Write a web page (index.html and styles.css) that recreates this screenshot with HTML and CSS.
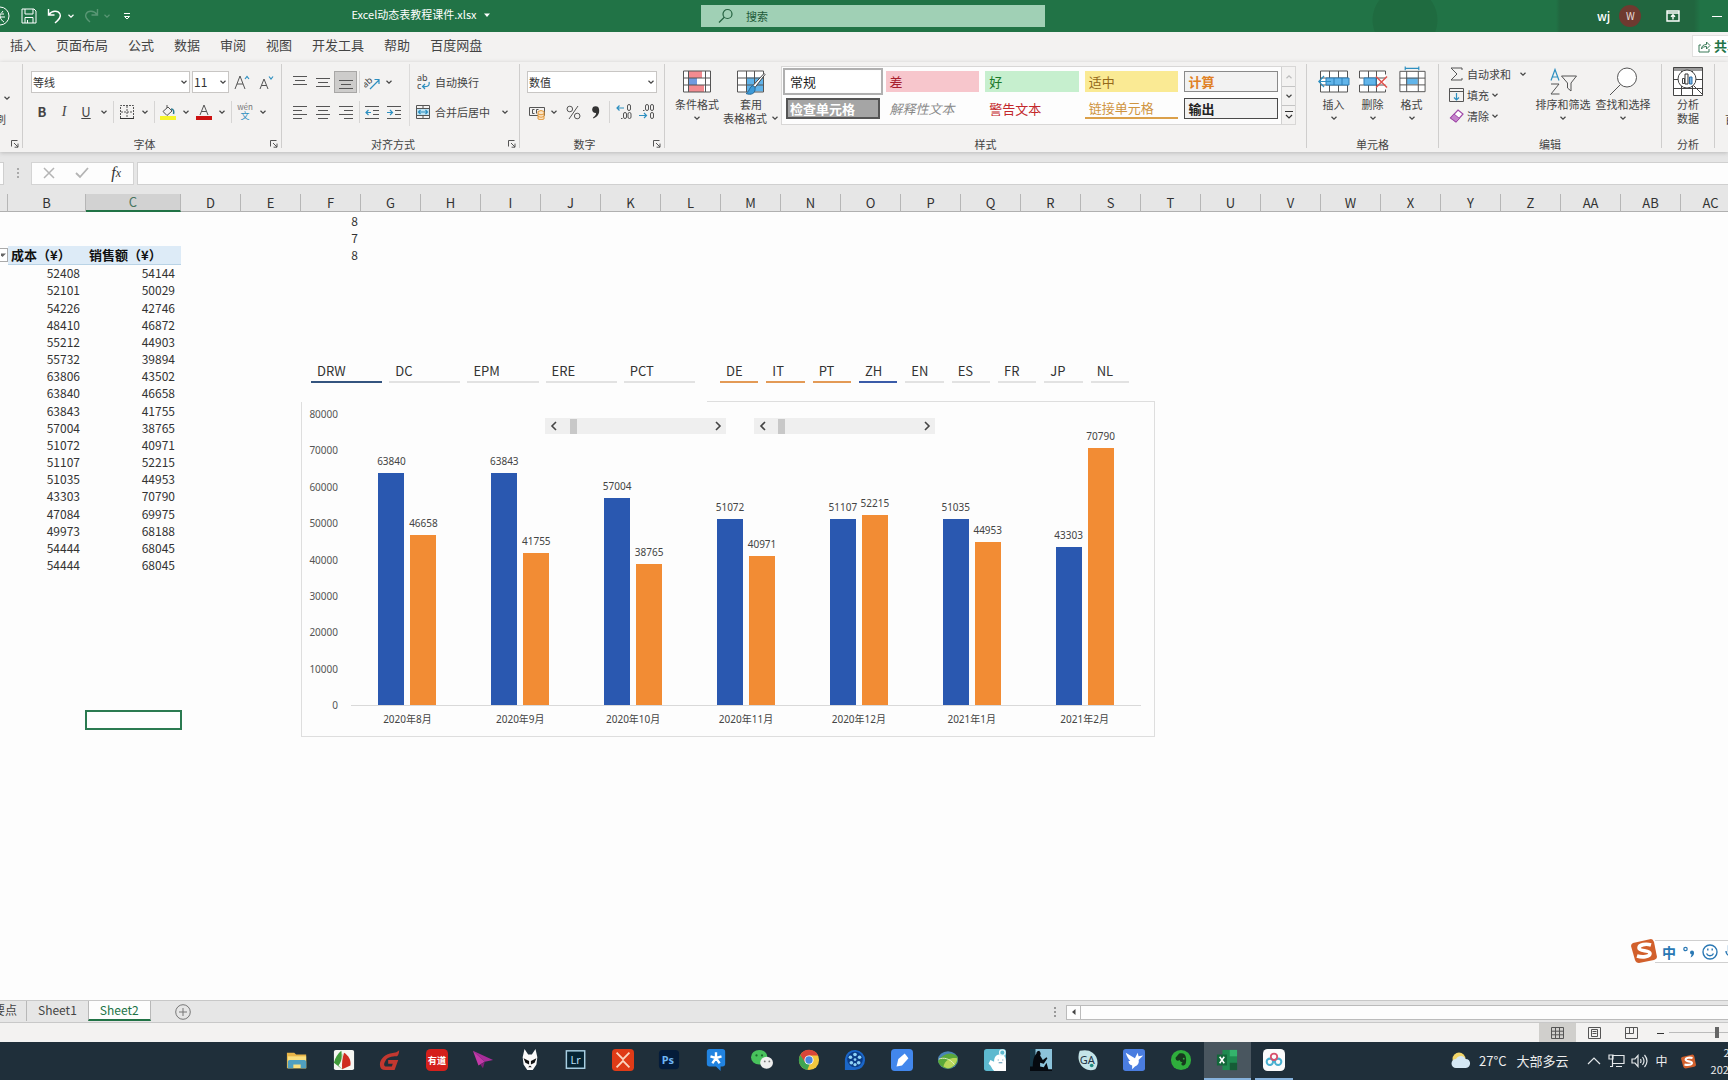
FILE: index.html
```html
<!DOCTYPE html>
<html lang="zh-CN">
<head>
<meta charset="utf-8">
<title>Excel动态表教程课件.xlsx</title>
<link rel="stylesheet" href="styles.css">
</head>
<body>
<svg class="defs" aria-hidden="true">
  <symbol id="chev" viewBox="0 0 8 8"><path d="M1.5 2.8 4 5.2l2.5-2.4" fill="none" stroke="currentColor" stroke-width="1.2"/></symbol>
  <symbol id="launch" viewBox="0 0 8 8"><path d="M.5 6.5v-6h6M3 3l4 4M7 3.6V7.200H3.600" fill="none" stroke="#555"/></symbol>
  <symbol id="sogou" viewBox="0 0 26 26"><path d="M2 5 20 1q2 0 3 3l3 15q0 2-3 3L8 25q-3 0-4-3L0 8q0-2 2-3z" fill="#d2602c"/><path d="M20 7c-5-1.500-12-.5-12 3s11 2 11 5.500-8 4-13 2.500" fill="none" stroke="#fff" stroke-width="3.600"/></symbol>
</svg>

<header class="titlebar">
  <div class="qat">
    <button class="qbtn auto" aria-label="自动保存"><svg width="20" height="20" viewBox="0 0 20 20"><circle cx="10" cy="10" r="9" class="ln"/><path class="ln" d="M7 5l1.500 2M13 5l-1.500 2M6 8h8M5 11h10M10 8v3c0 2-2 4-4 5M10 11c1 2 2 4 4 5"/></svg></button>
    <button class="qbtn save" aria-label="保存"><svg width="16" height="16" viewBox="0 0 16 16"><path class="ln" d="M1 1h12l2 2v12H1zM4 1v5h8V1M4 15V9.500h8V15M6.500 15v-3"/></svg></button>
    <button class="qbtn undo" aria-label="撤消"><svg width="16" height="16" viewBox="0 0 16 16"><path class="ln2" d="M1.500 1v6h6M2 6.500C5 2.500 11 2 13 6c1.500 3-1 5.500-5 9"/></svg><svg class="chev"><use href="#chev"/></svg></button>
    <button class="qbtn undo dim" aria-label="恢复"><svg width="16" height="16" viewBox="0 0 16 16"><path class="ln2" d="M14.500 1v6h-6M14 6.500C11 2.500 5 2 3 6c-1.500 3 1 5.500 4 8"/></svg><svg class="chev"><use href="#chev"/></svg></button>
    <button class="qbtn" aria-label="自定义"><svg width="10" height="10" viewBox="0 0 10 10"><path class="ln" d="M2 2.500h6M2.500 5.500 5 8l2.500-2.500z"/></svg></button>
  </div>
  <button class="doc">Excel动态表教程课件.xlsx<svg width="8" height="8" viewBox="0 0 8 8"><path d="M1 2.500h6L4 6z" fill="#fff"/></svg></button>
  <label class="search"><svg width="16" height="16" viewBox="0 0 16 16"><circle cx="9.500" cy="6" r="4.500"/><path d="M6.300 9.300 1 14.500"/></svg><input type="text" placeholder="搜索" aria-label="搜索"></label>
  <div class="user"><span>wj</span><span class="avatar">W</span>
    <button class="qbtn" aria-label="功能区显示选项"><svg width="14" height="12" viewBox="0 0 14 12"><path class="ln2" d="M1 1h12v10H1zM1 3h12M7 9.500V5M5 6.800 7 4.800l2 2"/></svg></button>
    <button class="qbtn mini" aria-label="最小化"><svg width="10" height="10" viewBox="0 0 10 10"><path class="ln" d="M0 5.500h10"/></svg></button>
  </div>
</header>

<nav class="tabs">
  <a href="#">插入</a><a href="#">页面布局</a><a href="#">公式</a><a href="#">数据</a><a href="#">审阅</a><a href="#">视图</a><a href="#">开发工具</a><a href="#">帮助</a><a href="#">百度网盘</a>
  <button class="share"><svg width="13" height="13" viewBox="0 0 13 13"><path d="M3 5H1v7h10V9M3.500 9c0-3 2-4.500 5-4.500V2l3.500 3.500L8.500 9V6.500c-2 0-4 .5-5 2.500z" fill="none" stroke="#3a7a58"/></svg>共享</button>
</nav>

<section class="ribbon">
  <div class="group g-clip">
    <div class="gbody clipcol"><svg class="chev"><use href="#chev"/></svg><span>刷</span></div>
    <div class="glabel"><svg class="launch"><use href="#launch"/></svg></div>
  </div>

  <div class="group g-font">
    <div class="gbody rows">
      <div class="row">
        <button class="combo wide">等线<svg class="chev"><use href="#chev"/></svg></button>
        <button class="combo size">11<svg class="chev"><use href="#chev"/></svg></button>
        <button class="b22" aria-label="增大字号"><svg width="16" height="16" viewBox="0 0 16 16"><path class="k" d="M1 15 6 2l5 13M3 10h6"/><path class="bl" d="M11 5l2-2.500L15 5"/></svg></button>
        <button class="b22" aria-label="减小字号"><svg width="16" height="16" viewBox="0 0 16 16"><path class="k" d="M2 15 6 5l4 10M3.500 11.500h5"/><path class="bl" d="M11 2.500 13 5l2-2.500"/></svg></button>
      </div>
      <div class="row tight">
        <button class="b22 bold">B</button><button class="b22 ital">I</button><button class="b22 und">U</button><button class="cv" aria-label="下划线"><svg class="chev"><use href="#chev"/></svg></button><i class="sep s5"></i>
        <button class="b22" aria-label="边框"><svg width="14" height="14" viewBox="0 0 14 14"><path d="M.5 13V.5h13V13M7 1v12M1 7h12" fill="none" stroke="#555" stroke-dasharray="2 1"/><path d="M0 13.500h14" stroke="#333"/></svg></button><button class="cv" aria-label="边框选项"><svg class="chev"><use href="#chev"/></svg></button><i class="sep s5"></i>
        <button class="b22" aria-label="填充颜色"><svg width="16" height="16" viewBox="0 0 16 16"><path class="k" d="M3 7.500 8 3l4 4-5 4.500zM7 4V1"/><path d="M11 5c3 0 3 3 2.500 5" fill="none" stroke="#2a7a90" stroke-width="1.500"/><path d="M0 12h16v4H0z" fill="#f6f52a"/></svg></button><button class="cv" aria-label="填充选项"><svg class="chev"><use href="#chev"/></svg></button>
        <button class="b22" aria-label="字体颜色"><svg width="16" height="16" viewBox="0 0 16 16"><path class="k" d="M4 11 8 1l4 10M5.500 7.500h5"/><path d="M0 12h16v4H0z" fill="#c11"/></svg></button><button class="cv" aria-label="字体颜色选项"><svg class="chev"><use href="#chev"/></svg></button><i class="sep s5"></i>
        <button class="b22 wen"><span>wén</span><span class="w2">文</span></button><button class="cv" aria-label="拼音"><svg class="chev"><use href="#chev"/></svg></button>
      </div>
    </div>
    <div class="glabel side">字体<svg class="launch"><use href="#launch"/></svg></div>
  </div>

  <div class="group g-align">
    <div class="gbody cols">
      <div class="rows">
        <div class="row tight">
          <button class="b23" aria-label="顶端对齐"><svg width="14" height="16" viewBox="0 0 14 16"><path class="k" d="M0 2.500h14M2 6.500h10M0 10.500h14"/></svg></button>
          <button class="b23" aria-label="垂直居中"><svg width="14" height="16" viewBox="0 0 14 16"><path class="k" d="M0 4.500h14M2 8.500h10M0 12.500h14"/></svg></button>
          <button class="b23 on" aria-label="底端对齐"><svg width="14" height="16" viewBox="0 0 14 16"><path class="k" d="M0 6.500h14M2 10.500h10M0 14.500h14"/></svg></button><i class="sep s5"></i>
          <button class="b20" aria-label="方向"><svg width="17" height="16" viewBox="0 0 17 16"><text x="-2" y="10" class="abt" transform="rotate(-42 5 8)">ab</text><path class="bl" d="M6 15 15 6M10.500 5.500H15V10"/></svg></button><button class="cv" aria-label="方向选项"><svg class="chev"><use href="#chev"/></svg></button>
        </div>
        <div class="row tight">
          <button class="b23" aria-label="左对齐"><svg width="14" height="14" viewBox="0 0 14 14"><path class="k" d="M0 1.500h14M0 5.500h9M0 9.500h14M0 13.500h9"/></svg></button>
          <button class="b23" aria-label="居中"><svg width="14" height="14" viewBox="0 0 14 14"><path class="k" d="M0 1.500h14M2 5.500h10M0 9.500h14M2 13.500h10"/></svg></button>
          <button class="b23" aria-label="右对齐"><svg width="14" height="14" viewBox="0 0 14 14"><path class="k" d="M0 1.500h14M5 5.500h9M0 9.500h14M5 13.500h9"/></svg></button><i class="sep s5"></i>
          <button class="b20" aria-label="减少缩进"><svg width="14" height="14" viewBox="0 0 14 14"><path class="k" d="M0 1.500h14M8 5.500h6M8 9.500h6M0 13.500h14"/><path class="bl" d="M6 7.500H1M3.500 5 1 7.500 3.500 10"/></svg></button>
          <button class="b23" aria-label="增加缩进"><svg width="14" height="14" viewBox="0 0 14 14"><path class="k" d="M0 1.500h14M8 5.500h6M8 9.500h6M0 13.500h14"/><path class="bl" d="M0 7.500h5M3 5l2.500 2.500L3 10"/></svg></button>
        </div>
      </div>
      <div class="rows ruled">
        <div class="row"><button class="tb"><svg width="14" height="16" viewBox="0 0 14 16"><text x="1" y="7" class="abt">ab</text><text x="1" y="15" class="abt">c</text><path class="bl" d="M13 8c1 4-2 5-6 4.500M9 10l-2.500 2.500L9 15"/></svg>自动换行</button></div>
        <div class="row"><button class="tb"><svg width="14" height="14" viewBox="0 0 14 14"><path d="M.5 3.500h13v7H.5z" fill="#bfe3f3"/><path class="k" d="M.5.5h13v13H.5zM.5 3.500h13M.5 10.500h13M7 .5v3M7 10.500v3"/><path class="bl" d="M2.500 7h9M4.500 5l-2 2 2 2M9.500 5l2 2-2 2"/></svg>合并后居中<svg class="chev far"><use href="#chev"/></svg></button></div>
      </div>
    </div>
    <div class="glabel side">对齐方式<svg class="launch"><use href="#launch"/></svg></div>
  </div>

  <div class="group g-num">
    <div class="gbody rows">
      <div class="row"><button class="combo num">数值<svg class="chev"><use href="#chev"/></svg></button></div>
      <div class="row tight">
        <button class="b20" aria-label="会计格式"><svg width="17" height="15" viewBox="0 0 17 15"><path class="k" d="M.5 2.500h15v8H.5zM5.500 4.500h-2v4h2M9.500 4.500h-2v4"/><path d="M9 6.500q3-2 6 0V14q-3 1.500-6 0zM9 9q3 1.500 6 0M9 11.500q3 1.500 6 0" fill="#fbe3c4" stroke="#e39a3c"/></svg></button><button class="cv" aria-label="会计选项"><svg class="chev"><use href="#chev"/></svg></button>
        <button class="b24" aria-label="百分比"><svg width="15" height="15" viewBox="0 0 15 15"><circle class="k" cx="3.800" cy="4" r="2.800"/><circle class="k" cx="11.200" cy="11" r="2.800"/><path class="k" d="M12 1 3 14"/></svg></button>
        <button class="b22" aria-label="千位分隔"><svg width="8" height="13" viewBox="0 0 8 13"><circle cx="3.600" cy="3.600" r="3.400" fill="#333"/><path d="M7 3c1 5-2 8-5.500 9.500L1 11.500c2.500-1.500 3.500-3.500 3-6z" fill="#333"/></svg></button><i class="sep s5"></i>
        <button class="b23" aria-label="增加小数"><svg width="16" height="16" viewBox="0 0 16 16"><path class="bl" d="M1 4h7M3.500 1.500 1 4l2.500 2.500"/><path class="k" d="M5 14.500h1.500"/><rect class="k" x="11.500" y=".5" width="3" height="6" rx="1.500"/><rect class="k" x="7.500" y="8.500" width="3" height="6" rx="1.500"/><rect class="k" x="12" y="8.500" width="3" height="6" rx="1.500"/></svg></button>
        <button class="b23" aria-label="减少小数"><svg width="16" height="16" viewBox="0 0 16 16"><path class="bl" d="M0 11.500h7.500M5 9l2.500 2.500L5 14"/><path class="k" d="M4 6.500h1.500"/><rect class="k" x="6.500" y=".5" width="3" height="6" rx="1.500"/><rect class="k" x="11.500" y=".5" width="3" height="6" rx="1.500"/><rect class="k" x="11.500" y="8.500" width="3" height="6" rx="1.500"/></svg></button>
      </div>
    </div>
    <div class="glabel side">数字<svg class="launch"><use href="#launch"/></svg></div>
  </div>

  <div class="group g-style">
    <div class="gbody bigs">
      <button class="big w52"><svg width="28" height="24" viewBox="0 0 28 24"><path d="M.5 1.500h27v21H.5z" fill="#fff"/><path d="M5 1.500h14v7H5zM5 15.500h16v7H5z" fill="#f28b90"/><path d="M5 8.500h9v7H5z" fill="#6f9be0"/><path class="k" d="M.5 1.500h27v21H.5zM.5 8.500h27M.5 15.500h27M5.500 1.500v21M22.500 1.500v21"/></svg><span>条件格式</span><svg class="chev"><use href="#chev"/></svg></button>
      <button class="big w54"><svg width="30" height="28" viewBox="0 0 30 28"><path d="M1.500 3.500h26v21h-26z" fill="#fff"/><path d="M10 10h17v14H10z" fill="#5fb3ea"/><path class="k" d="M1.500 3.500h26v21h-26zM1.500 10.500h26M1.500 17.500h26M10.500 3.500v21M18.500 3.500v21"/><path d="M29 7 19 20l-2-2L28 6z" fill="#fff" stroke="#444"/><path d="M17 18c-4 1-3 6-7 8 5 2 10 0 9-6z" fill="#3c9ad8" stroke="#286c9c"/></svg><span>套用</span><span>表格格式<svg class="chev"><use href="#chev"/></svg></span></button>
      <div class="gallery">
        <div class="tiles">
          <button class="tile normal">常规</button><button class="tile bad">差</button><button class="tile good">好</button><button class="tile neutral">适中</button><button class="tile calc">计算</button>
          <button class="tile check">检查单元格</button><button class="tile expl">解释性文本</button><button class="tile warn">警告文本</button><button class="tile link">链接单元格</button><button class="tile outp">输出</button>
        </div>
        <div class="gscroll"><button class="off" aria-label="上"><svg class="chev flip"><use href="#chev"/></svg></button><button aria-label="下"><svg class="chev"><use href="#chev"/></svg></button><button aria-label="其他"><svg width="8" height="10" viewBox="0 0 8 10"><path d="M0 1.500h8M1 5l3 3 3-3" fill="none" stroke="#333" stroke-width="1.200"/></svg></button></div>
      </div>
    </div>
    <div class="glabel">样式</div>
  </div>

  <div class="group g-cells">
    <div class="gbody bigs">
      <button class="big w39"><svg width="32" height="24" viewBox="0 0 32 24"><path d="M2.500 1.500h27v21h-27z" fill="#fff"/><path class="k" d="M2.500 1.500h27v21h-27zM2.500 8.500h27M2.500 15.500h27M11.500 1.500v21M20.500 1.500v21"/><path d="M8 8.500h23v7H8z" fill="#62b5ea" stroke="#2c7fb8"/><path d="M16 8.500v7M24 8.500v7" stroke="#2c7fb8"/><path class="bl" d="M13 12H1M6 6.500.8 12 6 17.500"/></svg><span>插入</span><svg class="chev"><use href="#chev"/></svg></button>
      <button class="big w39"><svg width="30" height="24" viewBox="0 0 30 24"><path d="M1.500 1.500h26v21h-26z" fill="#fff"/><path class="k" d="M27.500 5V1.500h-26v7M1.500 15.500v7h26V20M1.500 8.500h26M1.500 15.500h26M10.500 1.500v21M18.500 1.500v21"/><path d="M6 8.500h12v7H6z" fill="#62b5ea" stroke="#2c7fb8"/><path d="m18 7 11 11M29 7 18 18" stroke="#e0524e" stroke-width="1.500"/></svg><span>删除</span><svg class="chev"><use href="#chev"/></svg></button>
      <button class="big w39"><svg width="28" height="32" viewBox="0 0 28 32"><path d="M1.500 5.500h26v21h-26z" fill="#fff"/><path d="M8 12h12v7H8z" fill="#62b5ea"/><path class="k" d="M1.500 5.500h26v21h-26zM1.500 12.500h26M1.500 19.500h26M8.500 5.500v21M20.500 5.500v21"/><path class="bl" d="M7 2.500h14M7 .5v4M21 .5v4"/></svg><span>格式</span><svg class="chev"><use href="#chev"/></svg></button>
    </div>
    <div class="glabel">单元格</div>
  </div>

  <div class="group g-edit">
    <div class="gbody bigs">
      <div class="stack">
        <button class="tb s2"><svg width="16" height="14" viewBox="0 0 16 14"><path class="k" d="M13 3V1H2l6 6-6 6h11v-2"/></svg>自动求和<svg class="chev far"><use href="#chev"/></svg></button>
        <button class="tb s2"><svg width="16" height="14" viewBox="0 0 16 14"><path class="k" d="M.5.5h14v13H.5zM.5 3.500h14"/><path class="bl" d="M7.500 5v7M5 9.500 7.500 12 10 9.500"/></svg>填充<svg class="chev"><use href="#chev"/></svg></button>
        <button class="tb s2"><svg width="16" height="14" viewBox="0 0 16 14"><path d="M9 1 14 5 7 13 1.500 9z" fill="#fff" stroke="#a04ba8" stroke-width="1.200"/><path d="M1.500 9 5 5l5.500 4.500L7 13z" fill="#c583cc" stroke="#a04ba8"/></svg>清除<svg class="chev"><use href="#chev"/></svg></button>
      </div>
      <button class="big w60"><svg width="30" height="28" viewBox="0 0 30 28"><path class="bl" d="M3 13 7 2l4 11M4.500 9.500h5"/><path class="k" d="M3 16.500h8L3 26.500h8.500M13.500 8.500h15l-5.500 7v8l-3.500-3v-5z"/></svg><span>排序和筛选</span><svg class="chev"><use href="#chev"/></svg></button>
      <button class="big w60"><svg width="30" height="30" viewBox="0 0 30 30"><circle class="k" cx="19" cy="11" r="9.500" fill="#fff"/><path class="k" d="M12.500 18 2 28.500"/></svg><span>查找和选择</span><svg class="chev"><use href="#chev"/></svg></button>
    </div>
    <div class="glabel">编辑</div>
  </div>

  <div class="group g-ana">
    <div class="gbody bigs">
      <button class="big w52"><svg width="30" height="31" viewBox="0 0 30 31"><path d="M.5 1.500h29v28H.5z" fill="#fff"/><path d="M.5 1h29v4H.5z" fill="#999"/><path class="kk" d="M.5 1.500h29v28H.5zM.5 13.500h29M.5 22.500h29M8.500 5v24M19.500 5v24"/><circle cx="14" cy="13" r="9" fill="#fff" class="kk"/><path class="kk" d="m20.500 19.500 9 9M9.500 12.500h2v5h-2z"/><path d="M12 8h3v10h-3z" fill="#fff" stroke="#333"/><path d="M16.500 11h2.500v7h-2.500z" fill="#7db8e8" stroke="#2c6ea8"/></svg><span>分析</span><span>数据</span></button>
    </div>
    <div class="glabel">分析</div>
  </div>
  <div class="group g-last"><div class="gbody"><span>百度网盘</span></div></div>
</section>

<section class="fbar">
  <div class="namebox"></div>
  <svg class="grip" width="4" height="12" viewBox="0 0 4 12"><path d="M1 1h2v2H1zM1 5h2v2H1zM1 9h2v2H1z" fill="#aaa"/></svg>
  <div class="fbtns">
    <button aria-label="取消"><svg width="12" height="12" viewBox="0 0 12 12"><path d="m1 1 10 10M11 1 1 11" stroke="#b4b4b4" stroke-width="1.500"/></svg></button>
    <button aria-label="输入"><svg width="14" height="12" viewBox="0 0 14 12"><path d="m1 6 4 4 8-9" fill="none" stroke="#b4b4b4" stroke-width="1.800"/></svg></button>
    <button class="fx" aria-label="插入函数">f<sub>x</sub></button>
  </div>
  <input class="finput" type="text" aria-label="编辑栏">
</section>

<main class="sheet">
  <table class="grid">
    <colgroup><col class="ca"><col class="cb"><col class="cc"><col span="26"></colgroup>
    <thead><tr><th></th><th>B</th><th class="sel">C</th><th>D</th><th>E</th><th>F</th><th>G</th><th>H</th><th>I</th><th>J</th><th>K</th><th>L</th><th>M</th><th>N</th><th>O</th><th>P</th><th>Q</th><th>R</th><th>S</th><th>T</th><th>U</th><th>V</th><th>W</th><th>X</th><th>Y</th><th>Z</th><th>AA</th><th>AB</th><th>AC</th></tr></thead>
    <tbody>
      <tr><td></td><td></td><td></td><td></td><td></td><td class="f">8</td></tr>
      <tr><td></td><td></td><td></td><td></td><td></td><td class="f">7</td></tr>
      <tr><td><button class="filter" aria-label="筛选"><svg width="6" height="6" viewBox="0 0 6 6"><path d="M-2 1.500h7L1.500 5z" fill="#666"/></svg></button></td><td class="h">成本（¥）</td><td class="h">销售额（¥）</td><td></td><td></td><td class="f">8</td></tr>
      <tr><td></td><td>52408</td><td>54144</td></tr>
      <tr><td></td><td>52101</td><td>50029</td></tr>
      <tr><td></td><td>54226</td><td>42746</td></tr>
      <tr><td></td><td>48410</td><td>46872</td></tr>
      <tr><td></td><td>55212</td><td>44903</td></tr>
      <tr><td></td><td>55732</td><td>39894</td></tr>
      <tr><td></td><td>63806</td><td>43502</td></tr>
      <tr><td></td><td>63840</td><td>46658</td></tr>
      <tr><td></td><td>63843</td><td>41755</td></tr>
      <tr><td></td><td>57004</td><td>38765</td></tr>
      <tr><td></td><td>51072</td><td>40971</td></tr>
      <tr><td></td><td>51107</td><td>52215</td></tr>
      <tr><td></td><td>51035</td><td>44953</td></tr>
      <tr><td></td><td>43303</td><td>70790</td></tr>
      <tr><td></td><td>47084</td><td>69975</td></tr>
      <tr><td></td><td>49973</td><td>68188</td></tr>
      <tr><td></td><td>54444</td><td>68045</td></tr>
      <tr><td></td><td>54444</td><td>68045</td></tr>
    </tbody>
  </table>
  <div class="cursor"></div>

  <figure class="chart">
    <div class="axis"><span>80000</span><span>70000</span><span>60000</span><span>50000</span><span>40000</span><span>30000</span><span>20000</span><span>10000</span><span>0</span></div>
    <div class="plot">
      <div class="cat"><div class="col"><span>63840</span><i style="height:79.8%"></i></div><div class="col o"><span>46658</span><i style="height:58.32%"></i></div></div>
      <div class="cat"><div class="col"><span>63843</span><i style="height:79.8%"></i></div><div class="col o"><span>41755</span><i style="height:52.19%"></i></div></div>
      <div class="cat"><div class="col"><span>57004</span><i style="height:71.26%"></i></div><div class="col o"><span>38765</span><i style="height:48.46%"></i></div></div>
      <div class="cat"><div class="col"><span>51072</span><i style="height:63.84%"></i></div><div class="col o"><span>40971</span><i style="height:51.21%"></i></div></div>
      <div class="cat"><div class="col"><span>51107</span><i style="height:63.88%"></i></div><div class="col o"><span>52215</span><i style="height:65.27%"></i></div></div>
      <div class="cat"><div class="col"><span>51035</span><i style="height:63.79%"></i></div><div class="col o"><span>44953</span><i style="height:56.19%"></i></div></div>
      <div class="cat"><div class="col"><span>43303</span><i style="height:54.13%"></i></div><div class="col o"><span>70790</span><i style="height:88.49%"></i></div></div>
    </div>
    <div class="months"><span>2020年8月</span><span>2020年9月</span><span>2020年10月</span><span>2020年11月</span><span>2020年12月</span><span>2021年1月</span><span>2021年2月</span></div>
    <div class="spin one"><button aria-label="减"><svg width="8" height="10" viewBox="0 0 8 10"><path d="M6 1 2 5l4 4"/></svg></button><input type="range" min="0" max="100" value="6" aria-label="起始月份"><button aria-label="加"><svg width="8" height="10" viewBox="0 0 8 10"><path d="m2 1 4 4-4 4"/></svg></button></div>
    <div class="spin two"><button aria-label="减"><svg width="8" height="10" viewBox="0 0 8 10"><path d="M6 1 2 5l4 4"/></svg></button><input type="range" min="0" max="100" value="5" aria-label="月份数量"><button aria-label="加"><svg width="8" height="10" viewBox="0 0 8 10"><path d="m2 1 4 4-4 4"/></svg></button></div>
  </figure>

  <div class="slicer s1"><button class="navy">DRW</button><button>DC</button><button>EPM</button><button>ERE</button><button>PCT</button></div>
  <div class="slicer s9"><button class="or">DE</button><button class="or">IT</button><button class="or">PT</button><button class="blu">ZH</button><button>EN</button><button>ES</button><button>FR</button><button>JP</button><button>NL</button></div>

  <div class="ime"><svg class="logo" width="26" height="26"><use href="#sogou"/></svg><b>中</b><svg width="12" height="12" viewBox="0 0 12 12"><circle cx="2.500" cy="3" r="1.700" fill="none" stroke="#2a78b4" stroke-width="1.200"/><circle cx="9" cy="6.500" r="2" fill="#2a78b4"/><path d="M11 6.500c0 3-1.500 4-3.500 5l1.500-4z" fill="#2a78b4"/></svg><svg width="16" height="16" viewBox="0 0 16 16"><circle cx="8" cy="8" r="7" class="im"/><path class="im" d="M5.800 4.500v2M10.200 4.500v2M4.500 9.500c1.500 3 5.500 3 7 0"/></svg><svg width="10" height="14" viewBox="0 0 10 14"><path class="im" d="M1 6c0 6 8 6 8 0M5 10v4M3.500 1h3v6h-3z"/></svg></div>
</main>

<nav class="sheets">
  <button class="st lead">要点</button><button class="st">Sheet1</button><button class="st cur">Sheet2</button>
  <button class="plus" aria-label="新工作表"><svg width="16" height="16" viewBox="0 0 16 16"><circle cx="8" cy="8" r="7.300"/><path d="M8 4v8M4 8h8"/></svg></button>
  <div class="hs"><svg width="4" height="12" viewBox="0 0 4 12"><path d="M1 1h2v2H1zM1 5h2v2H1zM1 9h2v2H1z" fill="#999"/></svg><button aria-label="向左滚动"><svg width="8" height="8" viewBox="0 0 8 8"><path d="M5.500 1v6L2 4z" fill="#444"/></svg></button><div class="track"></div></div>
</nav>

<footer class="status">
  <button class="vb on" aria-label="普通"><svg width="13" height="12" viewBox="0 0 13 12"><path class="k" d="M.5.5h12v11H.5zM.5 4.200h12M.5 7.800h12M4.500.5v11M8.500.5v11"/></svg></button>
  <button class="vb" aria-label="页面布局"><svg width="13" height="12" viewBox="0 0 13 12"><path class="k" d="M.5.5h12v11H.5zM3.500 2.500h6v7h-6zM4.500 4.500h4M4.500 6.500h4"/></svg></button>
  <button class="vb" aria-label="分页预览"><svg width="13" height="12" viewBox="0 0 13 12"><path class="k" d="M.5.5h12v11H.5zM4.500.5v6M8.500.5v6M.5 6.500h8"/></svg></button>
  <button class="minus" aria-label="缩小"><svg width="8" height="8" viewBox="0 0 8 8"><path d="M0 4.500h7" stroke="#333"/></svg></button>
  <input class="zoom" type="range" min="0" max="100" value="50" aria-label="缩放">
</footer>

<nav class="taskbar">
  <div class="apps">
    <button aria-label="文件资源管理器"><svg viewBox="0 0 24 24"><path d="M1 4h8l2 2h11v15H1z" fill="#e8b548"/><path d="M2 8h20v13H2z" fill="#fadf7e"/><path d="M2 21v-7q0-2 2-2h16q2 0 2 2v7h-6v-4H8v4z" fill="#4f9fc0"/></svg></button>
    <button aria-label="飞翔阅读"><svg viewBox="0 0 24 24"><rect x="1" y="1" width="22" height="22" rx="2" fill="#f5f6f2"/><path d="M9 2Q3 7 1 15l9 7c2-7 1-14-1-20z" fill="#3f9a38"/><path d="M9 2c2 6 3 12 1 20l-4-4c4-5 4-10 3-16z" fill="#f5f6f2"/><path d="M12 4q-3 10-2 18l9-4C20 12 17 7 12 4z" fill="#cf2c20"/></svg></button>
    <button aria-label="G"><svg viewBox="0 0 24 24"><path d="M22 1c-2 3-6 3-10 4C5 7 1 12 1 17c0 4 2 6 6 6h10l4-11H10v4h5l-1 3H8c-3 0-3-3-1-6 2-4 7-5 12-5 2 0 3-4 3-7z" fill="#c23830"/></svg></button>
    <button aria-label="有道"><svg viewBox="0 0 24 24"><rect width="24" height="24" rx="5" fill="#d5201c"/><text x="2" y="16" class="t10">有道</text></svg></button>
    <button aria-label="纸飞机"><svg viewBox="0 0 24 24"><path d="m1 2 22 10-9 2z" fill="#a92d9a"/><path d="m1 2 6 16 7-4z" fill="#c33aa8"/><path d="m9 17 5-3-2 7z" fill="#7d2076"/></svg></button>
    <button aria-label="foobar2000"><svg viewBox="0 0 24 24"><path d="m6 0 4 6h4l4-6 2 9-1 8-4 6h-6l-4-6-1-8z" fill="#fafafa"/><path d="m5 10 6 3v4l-4-2zM19 10l-6 3v4l4-2zM10 20l2-2 2 2z" fill="#111"/></svg></button>
    <button aria-label="Lightroom"><svg viewBox="0 0 24 24"><rect x="1.500" y="2" width="20" height="19" fill="#062433" stroke="#a8cfe2" stroke-width="1.600"/><text x="6" y="16" class="t12 lr">Lr</text></svg></button>
    <button aria-label="XMind"><svg viewBox="0 0 24 24"><rect width="24" height="24" rx="4" fill="#df3b17"/><path d="m5 4 7 7 7-7M5 20l7-7 7 7" fill="none" stroke="#fbd6c0" stroke-width="2"/></svg></button>
    <button aria-label="Photoshop"><svg viewBox="0 0 24 24"><rect x="1" y="1" width="22" height="21" rx="4" fill="#041c3a"/><text x="4" y="16" class="t12 ps">Ps</text></svg></button>
    <button aria-label="滴答"><svg viewBox="0 0 24 24"><path d="M5 0h14q3 0 3 3v13q0 3-3 3h-2v5l-5-5H5q-3 0-3-3V3q0-3 3-3z" fill="#2183e0"/><path d="M12 10V3.500M12 10 6 8M12 10l6-2M12 10l-4 5.500M12 10l4 5.500" stroke="#fff" stroke-width="2.600"/></svg></button>
    <button aria-label="微信"><svg viewBox="0 0 24 24"><ellipse cx="9" cy="9" rx="9" ry="8" fill="#48c25c"/><ellipse cx="17" cy="15" rx="7" ry="6.500" fill="#eee"/><circle cx="6" cy="7" r="1.200" fill="#1c6a2c"/><circle cx="12" cy="7" r="1.200" fill="#1c6a2c"/><circle cx="15" cy="13.500" r="1" fill="#777"/><circle cx="20" cy="13.500" r="1" fill="#777"/></svg></button>
    <button aria-label="Chrome"><svg viewBox="0 0 24 24"><circle cx="12" cy="12" r="11" fill="#f3c73f"/><path d="M2.500 6.500A11 11 0 0 1 22 7H12L7 15z" fill="#d9463a"/><path d="M2.500 6.500 8 15l5 1-3 7A11 11 0 0 1 2.500 6.500z" fill="#3fa552"/><circle cx="12" cy="12" r="5" fill="#fff"/><circle cx="12" cy="12" r="4" fill="#4a86e0"/></svg></button>
    <button aria-label="视频"><svg viewBox="0 0 24 24"><path d="M1 23V11a11 11 0 1 1 11 12z" fill="#1a66c8"/><circle cx="12" cy="11.500" r="8.500" fill="#0b3c86"/><g fill="#8fd2f5"><circle cx="12" cy="11.500" r="1.500"/><circle cx="12" cy="6" r="2"/><circle cx="17" cy="9" r="2"/><circle cx="16" cy="15" r="2"/><circle cx="12" cy="17" r="1.800"/><circle cx="8" cy="15" r="2"/><circle cx="7" cy="9" r="2"/></g></svg></button>
    <button aria-label="笔记"><svg viewBox="0 0 24 24"><rect width="24" height="24" rx="4" fill="#4287ec"/><path d="m15 5 4 5-7 8-6 1 2-8z" fill="#fff"/></svg></button>
    <button aria-label="地球"><svg viewBox="0 0 24 24"><ellipse cx="12" cy="12" rx="11" ry="9.500" fill="#4a84b4"/><path d="M1 13C8 4 16 3 22 8c2 5-1 10-7 13C8 22 3 19 1 13z" fill="#5aa83a"/><path d="M7 19c2-8 9-10 15-9 0 6-5 11-11 11z" fill="#b8d75a"/><path d="M2 11c5-2 12-1 17 6" stroke="#e8f2c8" fill="none"/></svg></button>
    <button aria-label="助手"><svg viewBox="0 0 24 24"><rect width="24" height="24" rx="3" fill="#5db9cf"/><path d="M24 24H11c-3-3-3-6-6-8l2-4 4 2c0-6 3-8 7-8s6 3 6 8z" fill="#fff"/><circle cx="20" cy="4" r="3" fill="none" stroke="#e8f8fa" stroke-width="1.500"/><path d="M15 12h1M20 12h1M16 15h4" stroke="#48a" /></svg></button>
    <button aria-label="Kindle"><svg viewBox="0 0 24 24"><path d="M0 0h24v24H0z" fill="#8cc3da"/><path d="M0 0h6v24H0z" fill="#173848"/><path d="M11 2a3 3 0 0 0-4 3c-3 3-4 8-4 14H0v5h24v-2h-4l-2-7-3 5-4-1v-4l4 1 4-6-1-1-4 3-3-5c1-1 1-3-1-5z" fill="#050a10"/></svg></button>
    <button aria-label="GA"><svg viewBox="0 0 24 24"><path d="M3 2q9-2 14 2c6 4 7 13 3 18-6 3-13 0-16-5C1 12 1 7 3 2z" fill="#c4e4e8"/><text x="3" y="16" class="t12 ga">GA</text><circle cx="16" cy="18" r="2" fill="#1c8a80"/></svg></button>
    <button aria-label="飞鸟"><svg viewBox="0 0 24 24"><rect width="24" height="24" rx="3" fill="#4a7de0"/><path d="m3 4 10 6 3-6 1 4 5-1-5 5c1 3-1 6-4 7l-3 3v-4c-3-1-4-3-4-5l2 0C6 11 4 8 3 4z" fill="#fff"/></svg></button>
    <button aria-label="印象笔记"><svg viewBox="0 0 24 24"><circle cx="12" cy="12" r="11" fill="#2fae3c"/><path d="M6 9.500 10 5c5-1 7 1 7.500 5 .5 5-.5 8-3.500 8-2 0-2-3 0-3.500-2 0-3-1-3.500-2.500-2 1.500-4.500.5-4.500-2.500z" fill="#17391e"/><circle cx="15" cy="10.500" r="1" fill="#2fae3c"/></svg></button>
    <button class="act" aria-label="Excel"><svg viewBox="0 0 24 24"><path d="M7 1h16v22H7z" fill="#1f8a50"/><path d="M15 1h8v7h-8z" fill="#34b36c"/><path d="M15 15h8v8h-8z" fill="#165c36"/><path d="M1 6h11v12H1z" fill="#12683a"/><path d="m4 8.500 5 7M9 8.500l-5 7" stroke="#fff" stroke-width="1.700"/></svg></button>
    <button class="run" aria-label="百度网盘"><svg viewBox="0 0 24 24"><rect width="24" height="24" rx="5" fill="#fbfbfb"/><circle cx="7.500" cy="14" r="3.500" fill="none" stroke="#49b0d0" stroke-width="2.200"/><circle cx="16.500" cy="14" r="3.500" fill="none" stroke="#49b0d0" stroke-width="2.200"/><circle cx="12" cy="8.500" r="3.500" fill="none" stroke="#d9506c" stroke-width="2"/></svg></button>
  </div>
  <div class="tray">
    <svg width="20" height="18" viewBox="0 0 20 18"><circle cx="8" cy="7" r="6.500" fill="#f2d568"/><path d="M5 16a4.500 4.500 0 0 1 0-9c2-4 8-4 9.500 0C21 7 20 16 15 16z" fill="#d5e8f4"/></svg>
    <span class="wx">27°C</span><span class="wx city">大部多云</span>
    <svg class="up" width="14" height="10" viewBox="0 0 14 10"><path class="tr" d="m1 8 6-6 6 6"/></svg>
    <svg class="mon" width="17" height="14" viewBox="0 0 17 14"><path class="tr" d="M4 1.500h12v8H4M8 12.500h6M4.500 1v11.500M2 12.500h3M1 1h4v4H1z"/></svg>
    <svg class="snd" width="17" height="14" viewBox="0 0 17 14"><path class="tr" d="M1 5h3l3-3.500v11L4 9H1zM9.500 5q1 2 0 4M11.500 3q3 4 0 8M13.500 1q5 6 0 12"/></svg>
    <span class="zh">中</span>
    <svg class="so" width="15" height="15"><use href="#sogou"/></svg>
    <div class="clock"><span class="tm">2</span><span>202</span></div>
  </div>
</nav>
</body>
</html>
```

FILE: styles.css
```css
* { box-sizing: border-box; }
body {
  margin: 0; height: 100vh; display: flex; flex-direction: column; overflow: hidden;
  font: 11px/14px "Noto Sans CJK SC", sans-serif; color: #444; background: #e6e6e6;
}
button, input { font: inherit; color: inherit; background: none; border: 0; padding: 0; margin: 0; }
button { display: flex; align-items: center; justify-content: center; flex: none; white-space: nowrap; }
svg { flex: none; display: block; }
.defs { position: absolute; width: 0; height: 0; }
.chev { width: 8px; height: 8px; color: #444; }
.flip { transform: rotate(180deg); }
.launch { width: 8px; height: 8px; }
.k { fill: none; stroke: #555; }
.kk { stroke: #444; }
path.kk { fill: none; }
circle.k[fill] { fill: #fff; }
.bl { fill: none; stroke: #2d8fc0; stroke-width: 1.2; }
.ln { fill: none; stroke: #fff; }
.ln2 { fill: none; stroke: #fff; stroke-width: 1.4; }

/* title bar */
.titlebar {
  height: 32px; flex: none; display: flex; align-items: center; color: #fff; overflow: hidden;
  background:
    radial-gradient(circle at 1405px 20px, #1f6b40 0 32px, transparent 33px),
    linear-gradient(90deg, transparent 1556px, #21663f 1560px 1694px, transparent 1700px),
    #217346;
}
.qat { width: 341px; flex: none; display: flex; align-items: center; }
.auto { margin-left: -10px; width: 20px; }
.save { width: 37px; }
.undo { width: 36px; gap: 4px; justify-content: flex-start; }
.qat .chev { color: #fff; }
.dim { opacity: .25; }
.qat .qbtn:last-child { width: 16px; }
.doc { width: 160px; gap: 6px; padding-bottom: 4px; }
.doc svg { margin-top: 2px; }
.search { margin-left: 200px; width: 344px; height: 22px; flex: none; background: #a0d0b5; display: flex; align-items: center; padding-left: 17px; gap: 12px; }
.search path, .search circle { fill: none; stroke: #23613f; stroke-width: 1.2; }
.search input { width: 200px; color: #1d5a39; }
.search input::placeholder { color: #1d5a39; opacity: 1; }
.user { margin-left: auto; width: 131px; flex: none; display: flex; align-items: center; font-weight: 500; font-size: 12px; }
.avatar { width: 22px; height: 22px; margin-left: 9px; border-radius: 50%; background: #6f3a30; color: #e8dcd8; font: 10px/22px "Noto Sans CJK SC", sans-serif; text-align: center; }
.user .qbtn { margin-left: 25px; }
.user .mini { margin-left: 32px; }

/* ribbon tabs */
.tabs { height: 30px; flex: none; display: flex; align-items: center; gap: 20px; padding: 0 0 2px 10px; background: #f3f2f1; font-size: 13px; }
.tabs a { color: #444; text-decoration: none; white-space: nowrap; line-height: 26px; padding-bottom: 2px; }
.share { margin-left: auto; width: 36px; height: 22px; background: #fff; border: 1px solid #e1e0df; border-right: 0; overflow: hidden; justify-content: flex-start; padding-left: 5px; gap: 3px; color: #217346; font-weight: 700; }

/* ribbon */
.ribbon { flex: none; height: 90px; display: flex; padding-top: 2px; overflow: hidden; background: #f3f2f1; box-shadow: 0 1px 4px #bbb; }
.group { flex: none; height: 84px; display: flex; flex-direction: column; border-right: 1px solid #cfcecd; }
.gbody { height: 73px; flex: none; }
.glabel { position: relative; height: 14px; flex: none; display: flex; justify-content: center; }
.glabel .launch { position: absolute; right: 3px; top: 3px; }
.side { padding-right: 15px; }
.g-clip { width: 23px; }
.clipcol { display: flex; flex-direction: column; align-items: flex-start; padding: 30px 0 0 3px; gap: 10px; overflow: hidden; }
.clipcol span { margin-left: -8px; }
.g-font { width: 259px; }
.g-font .gbody { padding-left: 8px; }
.g-align { width: 238px; }
.g-num { width: 145px; }
.g-num .gbody { padding-left: 7px; }
.g-style { width: 642px; }
.g-style .gbody { padding-left: 6px; }
.g-cells { width: 132px; }
.g-cells .gbody { padding-left: 7px; }
.g-edit { width: 223px; }
.g-edit .gbody { padding-left: 10px; }
.g-ana { width: 53px; }
.g-last { border: 0; width: 13px; }
.g-last .gbody { padding: 48px 0 0 10px; width: 60px; }
.rows { display: flex; flex-direction: column; gap: 8px; padding-top: 7px; }
.row { display: flex; align-items: center; gap: 2px; height: 22px; }
.row.tight { gap: 0; }
.cols { display: flex; padding-left: 6px; }
.cols > .rows:first-child { width: 121px; height: 62px; }
.ruled { height: 62px; padding-left: 6px; border-left: 1px solid #dcdbda; }
.tb { gap: 5px; }
.tb .far { margin-left: 6px; }
.s2 { height: 21px; gap: 2px; }
.b20 { width: 20px; height: 22px; }
.b22 { width: 22px; height: 22px; }
.b23 { width: 23px; height: 22px; }
.b24 { width: 24px; height: 22px; }
.on { background: #cdcccb; border: 1px solid #a8a7a6; }
.cv { width: 14px; height: 22px; }
.sep { height: 22px; flex: none; background: linear-gradient(#d6d5d4, #d6d5d4) center / 1px 100% no-repeat; }
.s5 { width: 5px; }
.bold { font-weight: 700; font-size: 13px; }
.ital { font: italic 14px "Liberation Serif", serif; }
.und { text-decoration: underline; font-size: 13px; }
.wen { flex-direction: column; font-size: 8px; line-height: 8px; color: #777; }
.w2 { color: #2d8fc0; font-size: 9px; line-height: 10px; }
.abt { font: 9px "Noto Sans", sans-serif; fill: #444; }
.combo { height: 22px; background: #fff; border: 1px solid #c8c6c4; justify-content: space-between; padding: 0 1px; color: #333; }
.wide { width: 159px; }
.size { width: 37px; font-size: 12px; }
.num { width: 130px; }
.bigs { display: flex; padding-top: 2px; }
.big { flex-direction: column; justify-content: flex-start; height: 62px; }
.big > svg:first-child { height: 31px; }
.big span { display: flex; align-items: center; gap: 4px; }
.big > .chev { margin-top: 3px; }
.w39 { width: 39px; }
.w52 { width: 52px; }
.w54 { width: 54px; padding-left: 2px; }
.w60 { width: 60px; }
.stack { width: 84px; margin-top: -3px; display: flex; flex-direction: column; align-items: flex-start; }
.gallery { margin-left: 4px; width: 515px; height: 59px; display: flex; background: #fdfdfd; border: 1px solid #d8d7d6; }
.tiles { flex: 1; display: grid; grid-template-columns: repeat(5, 1fr); grid-auto-rows: 21px; gap: 6px; padding: 4px 3px 0 4px; font-size: 13px; }
.tile { width: auto; justify-content: flex-start; padding-left: 4px; color: #222; }
.normal { outline: 2px solid #b0b0b0; outline-offset: 1px; background: #fff; }
.bad { background: #f7c6cc; color: #a8202c; }
.good { background: #c6efce; color: #1c7a2a; }
.neutral { background: #faea94; color: #94691a; }
.calc { background: #f2f2f2; border: 1px solid #8a8a8a; color: #e08024; font-weight: 700; padding-left: 3px; }
.check { background: #a5a5a5; border: 2px solid #555; color: #fff; font-weight: 700; padding-left: 2px; }
.expl { color: #8a8a8a; font-style: italic; }
.warn { color: #c3282c; }
.link { color: #cf9440; border-bottom: 2px solid #dba04a; }
.outp { background: #f2f2f2; border: 1px solid #4a4a4a; font-weight: 700; padding-left: 3px; }
.gscroll { width: 14px; display: grid; grid-template-rows: 1fr 1fr 1fr; border-left: 1px solid #d0d0d0; background: #f3f2f1; }
.gscroll button + button { border-top: 1px solid #c4c4c4; }
.gscroll .off .chev { color: #bbb; }

/* formula bar */
.fbar { flex: none; height: 42px; display: flex; align-items: center; }
.namebox { width: 4px; height: 23px; background: #fdfdfd; border: 1px solid #cfcfcf; border-left: 0; }
.grip { margin: 0 11px 0 12px; }
.fbtns { width: 103px; height: 23px; flex: none; display: grid; grid-template-columns: 1fr 1fr 1fr; background: #fdfdfd; border: 1px solid #d4d4d4; }
.fx { font: italic 16px/16px "Liberation Serif", serif; color: #333; }
.fx sub { font-size: 12px; vertical-align: baseline; }
.finput { flex: 1; margin-left: 3px; height: 23px; background: #fdfdfd; border: 1px solid #d0d0d0; border-right: 0; }

/* worksheet */
.sheet { position: relative; flex: 1; min-height: 0; overflow: hidden; background: linear-gradient(#e6e6e6 18px, #fdfdfd 18px); }
.grid { table-layout: fixed; border-collapse: separate; border-spacing: 0; width: 1741px; height: 380px; font-size: 12px; line-height: 16px; color: #333; }
col { width: 60px; }
.ca { width: 8px; }
.cb { width: 78px; }
.cc { width: 95px; }
.grid th { height: 18px; padding: 0; font-weight: 400; font-size: 13px; border-right: 1px solid #b6b6b6; border-bottom: 1px solid #b0b0b0; }
.grid .sel { background: #d2d2d2; color: #4a7560; border-bottom: 2px solid #217346; }
.grid td { padding: 0 6px 0 0; text-align: right; white-space: nowrap; }
.grid .f { padding-right: 3px; }
.grid .h { text-align: left; padding: 0 0 0 3px; font-size: 13px; font-weight: 700; text-spacing-trim: space-all; background: #ddebf7; border-bottom: 1px solid #b9d3e6; color: #111; }
.grid td:first-child { padding: 0; }
.filter { width: 8px; height: 14px; background: #fff; border: 1px solid #aaa; border-left: 0; }
.cursor { position: absolute; left: 85px; top: 516px; width: 97px; height: 20px; border: 2px solid #2a7a50; }

/* chart */
.chart {
  position: absolute; left: 301px; top: 207px; width: 854px; height: 336px; margin: 0; padding: 7px 13px 0 0;
  border: 1px solid #dedede; display: grid; grid-template: 301px 1fr / 49px 1fr; font: 10px/10px "Noto Sans", "Noto Sans CJK SC", sans-serif; color: #444;
}
.axis { display: flex; flex-direction: column; justify-content: space-between; align-items: flex-end; padding-right: 13px; color: #555; }
.plot { margin: 5px 0 4px; display: flex; border-bottom: 1px solid #d9d9d9; }
.cat { flex: 1; display: flex; justify-content: center; gap: 6px; }
.col { width: 26px; display: flex; flex-direction: column; justify-content: flex-end; align-items: center; }
.col span { line-height: 14px; margin-bottom: 5px; }
.col i { width: 100%; flex: none; background: #2a58b0; }
.col.o i { background: #f28c34; }
.months { grid-column: 2; display: flex; padding-top: 2px; }
.months span { flex: 1; text-align: center; line-height: 14px; }
.spin { position: absolute; top: 16px; width: 181px; height: 16px; display: flex; background: #efefef; }
.one { left: 243px; }
.two { left: 452px; }
.spin button { width: 17px; }
.spin path { fill: none; stroke: #444; stroke-width: 1.6; }
.spin input { flex: 1; min-width: 0; appearance: none; height: 16px; }
.spin input::-webkit-slider-thumb { appearance: none; width: 7px; height: 15px; background: #c8c8c8; }

/* slicers */
.slicer { position: absolute; display: grid; font-size: 13px; color: #333; background: #fdfdfd; }
.slicer button { height: 22px; justify-content: flex-start; padding: 0 0 1px 6px; border-bottom: 2px solid #e2e2e2; }
.s1 { left: 301px; top: 167px; width: 406px; height: 41px; padding: 0 12px 0 10px; grid-template-columns: repeat(5, 1fr); column-gap: 7px; }
.s9 { left: 720px; top: 167px; width: 409px; grid-template-columns: repeat(9, 1fr); column-gap: 8px; }
.slicer .navy { border-color: #34547f; }
.slicer .or { border-color: #e39a56; }
.slicer .blu { border-color: #3a5ba8; }

.ime { position: absolute; right: 0; top: 746px; width: 73px; height: 23px; display: flex; align-items: center; gap: 7px; padding-left: 7px; background: #fff; border: solid #d0d0d0; border-width: 1px 0; color: #2a78b4; font-size: 14px; }
.ime .logo { position: absolute; left: -24px; top: -3px; }
.im { fill: none; stroke: #2a78b4; stroke-width: 1.4; }

/* sheet tabs */
.sheets { flex: none; height: 23px; display: flex; align-items: flex-start; border-top: 1px solid #c8c8c8; border-bottom: 1px solid #c8c8c8; font-size: 12px; }
.st { height: 20px; padding: 0 11px 3px; }
.lead { margin-left: -18px; padding-right: 9px; border-right: 1px solid #b8b8b8; }
.cur { background: #fdfdfd; color: #217346; border: solid #b8b8b8; border-width: 0 1px 2px; border-bottom-color: #217346; padding-bottom: 1px; }
.plus { margin: 3px 0 0 24px; }
.plus svg * { fill: none; stroke: #777; }
.hs { margin: 3px 0 0 auto; width: 675px; height: 16px; flex: none; display: flex; align-items: center; }
.hs button { margin-left: 9px; width: 15px; height: 15px; background: #fdfdfd; border: 1px solid #bbb; }
.track { flex: 1; height: 15px; background: #fdfdfd; border: solid #bbb; border-width: 1px 0; }

.status { flex: none; height: 19px; display: flex; align-items: center; justify-content: flex-end; background: #f3f2f1; }
.vb { width: 37px; height: 19px; }
.status .on { border: 0; background: #d0cfcc; }
.minus { width: 15px; justify-content: flex-end; margin-right: 4px; }
.zoom { width: 95px; margin-right: -36px; height: 19px; appearance: none; background: linear-gradient(#bbb, #bbb) center / 100% 1px no-repeat; }
.zoom::-webkit-slider-thumb { appearance: none; width: 4px; height: 11px; background: #666; }

/* taskbar */
.taskbar { flex: none; height: 38px; display: flex; background: #1f2f3a; color: #eee; }
.apps { margin-left: 274px; width: 1023px; flex: none; display: grid; grid-template-columns: repeat(22, 1fr); }
.apps button { border-bottom: 2px solid transparent; }
.apps svg { width: 22px; height: 22px; }
.apps .act { background: #49565f; border-color: #86b2dc; }
.apps .run { margin: 0 4px; border-color: #86b2dc; }
.t10 { font: 700 10px "Noto Sans CJK SC", sans-serif; fill: #fff; }
.t12 { font: 700 12px "Noto Sans", sans-serif; fill: #b8dcf0; }
.lr { font-weight: 400; }
.ps { fill: #6fb6f5; }
.ga { font-weight: 400; fill: #234; }
.tray { margin-left: auto; width: 277px; flex: none; display: flex; align-items: center; overflow: hidden; }
.wx { font-size: 13px; margin-left: 8px; white-space: nowrap; }
.city { margin-left: 10px; }
.tr { fill: none; stroke: #e4e8ea; stroke-width: 1.2; }
.up { margin-left: 18px; }
.mon { margin-left: 7px; }
.snd { margin-left: 6px; }
.zh { font-size: 12px; margin-left: 8px; }
.so { margin-left: 13px; }
.clock { margin-left: 15px; display: flex; flex-direction: column; line-height: 17px; }
.tm { margin-left: 13px; }
```
